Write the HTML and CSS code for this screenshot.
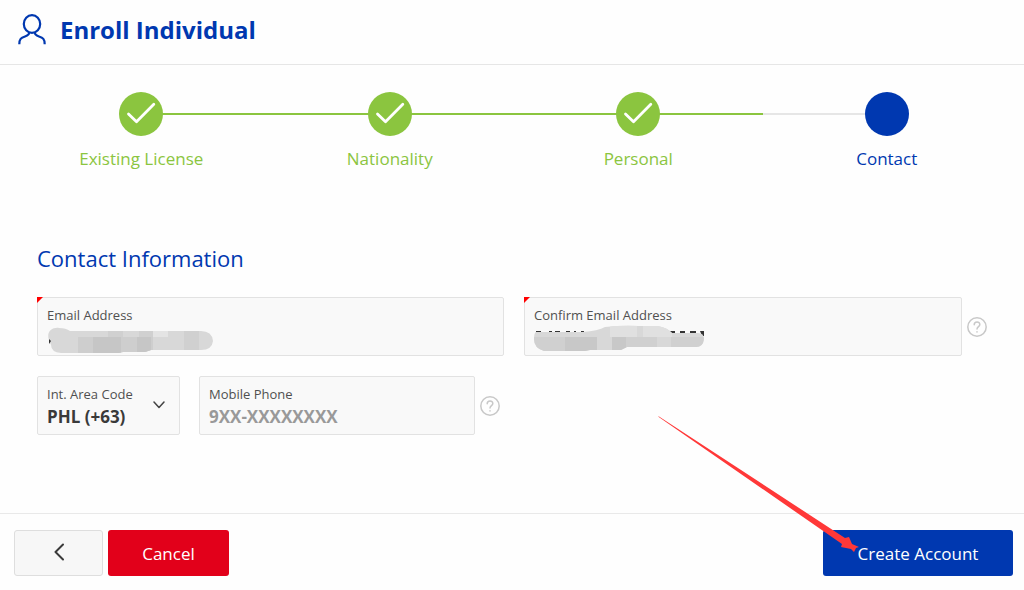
FILE: index.html
```html
<!DOCTYPE html>
<html lang="en">
<head>
<meta charset="utf-8">
<meta name="viewport" content="width=device-width, initial-scale=1">
<title>Enroll Individual</title>
<link rel="stylesheet" href="styles.css">
</head>
<body>
<header class="header">
  <svg class="user-icon" viewBox="0 0 28 32" aria-hidden="true"><ellipse cx="14" cy="10" rx="8.200" ry="8.800"/><path d="M11.300 18.300c0 2.500-1.300 3.200-4.300 4.200-4 1.300-5.700 2.500-5.700 7.700M16.700 18.300c0 2.500 1.300 3.200 4.300 4.200 4 1.300 5.700 2.500 5.700 7.700"/></svg>
  <h1 class="title">Enroll Individual</h1>
</header>

<main class="main">
  <ol class="steps">
    <li class="step done"><span class="dot"><svg viewBox="0 0 44 44" aria-hidden="true"><path d="M9.500 22l8 7.800L34.800 12.300"/></svg></span><span>Existing License</span></li>
    <li class="step done"><span class="dot"><svg viewBox="0 0 44 44" aria-hidden="true"><path d="M9.500 22l8 7.800L34.800 12.300"/></svg></span><span>Nationality</span></li>
    <li class="step done"><span class="dot"><svg viewBox="0 0 44 44" aria-hidden="true"><path d="M9.500 22l8 7.800L34.800 12.300"/></svg></span><span>Personal</span></li>
    <li class="step current" aria-current="step"><span class="dot"></span><span>Contact</span></li>
  </ol>

  <form class="form" id="contact">
    <h2 class="section-title">Contact Information</h2>
    <div class="fields">
      <div class="field required">
        <label for="email">Email Address</label>
        <input id="email" type="email" required>
        <svg class="mask" viewBox="0 0 180 30" aria-hidden="true">
          <clipPath id="m1"><path d="M2 15C-1 7 5 2 12 3q7 0 11 3H154q11 0 12 10-1 9-12 9H104l-6 2H76l-4 1H14Q4 27 4 20z"/></clipPath>
          <g clip-path="url(#m1)"><path fill="#d8d8d8" d="M0 0h180v30H0z"/><path fill="#cecece" d="M31 12h75v17H31z"/><path fill="#c6c6c6" d="M46 12h28v17H46zM90 12h14v17H90z"/><path fill="#d0d0d0" d="M61 0h15v12H61zM92 0h14v12H92zM137 0h15v30h-15z"/><path fill="#e4e4e4" d="M106 0h15v12h-15z"/></g>
          <path fill="#333" d="M2 14l2 2-2 3z"/>
        </svg>
      </div>
      <div class="with-help">
        <div class="field required">
          <label for="confirm">Confirm Email Address</label>
          <input id="confirm" type="email" required>
          <svg class="mask" viewBox="0 0 180 30" aria-hidden="true">
            <path fill="#333" d="M2 6h5v2H4v1H2zM15 6h3v2h-3zM21 6h5v2h-5zM32 6h4v2h-4zM40 6h2v2h-2zM47 6h3v2h-3zM135 6h6v2h-6zM146 6h5v2h-5zM156 6h6v2h-6zM166 6h4v5h-2z"/>
            <clipPath id="m2"><path d="M2 7H49q15-1 22-5 18-2 34-1h19q10 2 14 7h26q6 0 6 6-1 8-8 8H93l-6 3H56l-5 1H10Q0 23 0 14 0 8 2 7z"/></clipPath>
            <g clip-path="url(#m2)"><path fill="#d8d8d8" d="M0 0h180v30H0z"/><path fill="#c8c8c8" d="M31 12h32v18H31zM78 12h14v18H78z"/><path fill="#d0d0d0" d="M0 12h31v18H0zM92 12h31v18H92zM137 12h33v18h-33z"/><path fill="#e0e0e0" d="M76 0h27v12H76zM109 0h29v12h-29z"/></g>
          </svg>
        </div>
        <button class="help" type="button" aria-label="Help with email address"><svg viewBox="0 0 20 20" aria-hidden="true"><circle cx="10" cy="10" r="9.200"/><path d="M7.200 7.800c0-3.900 5.800-3.700 5.600-.2-.1 2-2.800 2.100-2.800 4.500M10 14.800v.3"/></svg></button>
      </div>
      <div class="with-help">
        <div class="field area">
          <label for="area">Int. Area Code</label>
          <select id="area"><option>PHL (+63)</option></select>
          <svg class="chevron" viewBox="0 0 12 8" aria-hidden="true"><path d="M1 1l5 5.500L11 1"/></svg>
        </div>
        <div class="field">
          <label for="phone">Mobile Phone</label>
          <input id="phone" type="tel" placeholder="9XX-XXXXXXXX">
        </div>
        <button class="help" type="button" aria-label="Help with mobile phone"><svg viewBox="0 0 20 20" aria-hidden="true"><circle cx="10" cy="10" r="9.200"/><path d="M7.200 7.800c0-3.900 5.800-3.700 5.600-.2-.1 2-2.800 2.100-2.800 4.500M10 14.800v.3"/></svg></button>
      </div>
    </div>
  </form>
</main>

<footer class="footer">
  <button class="btn back" type="button" aria-label="Back"><svg viewBox="0 0 10 18" aria-hidden="true"><path d="M9 1.500L1.500 9 9 16.500"/></svg></button>
  <button class="btn cancel" type="button">Cancel</button>
  <div class="submit">
    <button class="btn create" type="submit" form="contact">Create Account</button>
    <svg class="arrow" viewBox="0 0 202 138" aria-hidden="true"><path d="M0 0.500L1 0.500 187 122 191 121 194 128 201 131 198 132 196 136 193 133 183 131 184 128z"/></svg>
  </div>
</footer>
</body>
</html>
```
FILE: styles.css
```css
* { box-sizing: border-box; }

body {
  margin: 0;
  min-height: 100vh;
  display: flex;
  flex-direction: column;
  background: #fefefe;
  color: #444;
  font-family: "Open Sans", "Noto Sans", sans-serif;
  font-size: 17px;
}

button, input, select { font: inherit; }

svg { fill: none; stroke-linecap: round; stroke-linejoin: round; }

.header {
  display: flex;
  align-items: center;
  gap: 14px;
  height: 65px;
  padding: 0 18px 5px;
  border-bottom: 1px solid #e6e6e6;
}

.user-icon { width: 28px; height: 32px; stroke: #0038b0; stroke-width: 2.2; stroke-linecap: butt; }

.title { margin: 0; color: #0038b0; font-size: 24px; line-height: 32px; }

.main { flex: 1; }

.steps {
  display: grid;
  grid-template-columns: repeat(4, 1fr);
  margin: 0;
  padding: 27px 13px 0 17px;
  list-style: none;
}

.step {
  position: relative;
  display: flex;
  flex-direction: column;
  align-items: center;
  gap: 11px;
  line-height: 24px;
  color: #8bc53f;
}

.step::before {
  content: "";
  position: absolute;
  top: 21px;
  left: 0;
  width: 100%;
  height: 2px;
  background: #8bc53f;
}

.step:first-child::before { left: 50%; width: 50%; }

.step.current::before { width: 50%; background: #e6e6e6; }

.dot {
  position: relative;
  width: 44px;
  height: 44px;
  border-radius: 50%;
  background: #8bc53f;
}

.dot svg { display: block; stroke: #fff; stroke-width: 2.8; }

.step.current { color: #0038b0; }

.current .dot { background: #0038b0; }

.form { padding: 71px 33px 0 37px; }

.section-title {
  margin: 0 0 23px;
  color: #0038b0;
  font-size: 22px;
  font-weight: 400;
  line-height: 32px;
}

.fields {
  display: grid;
  grid-template-columns: 1fr 1fr;
  gap: 20px;
}

.with-help {
  display: flex;
  align-items: center;
  gap: 5px;
  padding-right: 4px;
}

.field {
  position: relative;
  flex: 1;
  min-width: 0;
  height: 59px;
  padding: 7px 9px 0;
  border: 1px solid #e2e2e2;
  border-radius: 2px;
  background: #f9f9f9;
}

.field.area { flex: 0 0 143px; margin-right: 14px; }

.required::before {
  content: "";
  position: absolute;
  top: -1px;
  left: -1px;
  border-top: 6px solid #f00;
  border-right: 6px solid transparent;
}

.field label { display: block; font-size: 13px; line-height: 20px; color: #505050; }

.field input, .field select {
  display: block;
  width: 100%;
  height: 24px;
  padding: 0;
  border: 0;
  outline: 0;
  appearance: none;
  background: transparent;
  color: #3a3a3a;
  font-weight: 700;
}

.field input::placeholder { color: #999; opacity: 1; }

.mask { position: absolute; left: 9px; top: 27px; width: 180px; height: 30px; }

.chevron { position: absolute; right: 14px; top: 24px; width: 12px; height: 8px; stroke: #444; stroke-width: 1.5; pointer-events: none; }

.help { width: 20px; height: 20px; padding: 0; border: 0; background: none; }

.help svg { display: block; stroke: #c8c8c8; stroke-width: 1.5; }

.footer {
  display: flex;
  gap: 5px;
  padding: 16px 11px 14px 14px;
  border-top: 1px solid #e9e9e9;
}

.btn {
  height: 46px;
  padding: 0;
  border: 0;
  border-radius: 3px;
  color: #fff;
}

.back { display: flex; align-items: center; justify-content: center; width: 89px; padding-bottom: 2px; border: 1px solid #dedede; background: #f7f7f7; }

.back svg { width: 10px; height: 18px; stroke: #3a3a3a; stroke-width: 2; }

.cancel { width: 121px; background: #e2001a; }

.submit { position: relative; margin-left: auto; }

.create { width: 190px; background: #0038b0; }

.arrow { position: absolute; left: -165px; top: -114px; width: 202px; height: 138px; fill: #ff3838; pointer-events: none; }
```
